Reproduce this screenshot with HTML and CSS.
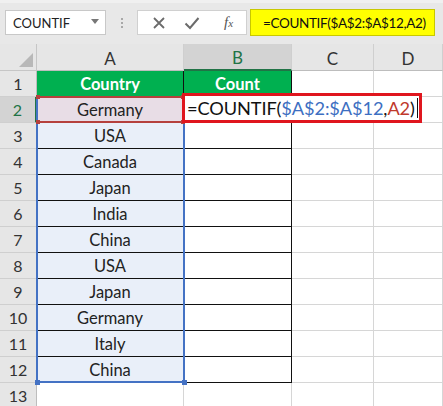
FILE: index.html
```html
<!DOCTYPE html>
<html>
<head>
<meta charset="utf-8">
<link rel="stylesheet" href="styles.css">
</head>
<body>
<div class="toolbar">
  <div class="namebox"><span class="nametext">COUNTIF</span><svg class="caret" width="8" height="5" viewBox="0 0 8 5"><path d="M0 0H8L4 5Z" fill="#777"/></svg></div>
  <div class="dots"><i></i><i></i><i></i></div>
  <div class="fbuttons">
    <svg class="ico" width="14" height="14" viewBox="0 0 14 14"><path d="M2 2L12 12M12 2L2 12" stroke="#6b6b6b" stroke-width="1.8"/></svg>
    <svg class="ico" width="16" height="14" viewBox="0 0 16 14"><path d="M1.5 7.5L6 12L14.5 2" stroke="#6b6b6b" stroke-width="2" fill="none"/></svg>
    <span class="fx">f<span class="fxs">x</span></span>
  </div>
  <div class="formula">=COUNTIF($A$2:$A$12,A2)</div>
</div>
<div class="sheet">
  <div class="grid">
    <div class="corner"><svg width="14" height="14" viewBox="0 0 14 14"><path d="M14 0V14H0Z" fill="#b8b8b8"/></svg></div>
    <div class="ch">A</div><div class="ch active">B</div><div class="ch">C</div><div class="ch">D</div>

    <div class="rh">1</div><div class="c a hd">Country</div><div class="c b hd">Count</div><div class="c"></div><div class="c"></div>
    <div class="rh active">2</div><div class="c a red">Germany</div><div class="c b"></div><div class="c"></div><div class="c"></div>
    <div class="rh">3</div><div class="c a">USA</div><div class="c b"></div><div class="c"></div><div class="c"></div>
    <div class="rh">4</div><div class="c a">Canada</div><div class="c b"></div><div class="c"></div><div class="c"></div>
    <div class="rh">5</div><div class="c a">Japan</div><div class="c b"></div><div class="c"></div><div class="c"></div>
    <div class="rh">6</div><div class="c a">India</div><div class="c b"></div><div class="c"></div><div class="c"></div>
    <div class="rh">7</div><div class="c a">China</div><div class="c b"></div><div class="c"></div><div class="c"></div>
    <div class="rh">8</div><div class="c a">USA</div><div class="c b"></div><div class="c"></div><div class="c"></div>
    <div class="rh">9</div><div class="c a">Japan</div><div class="c b"></div><div class="c"></div><div class="c"></div>
    <div class="rh">10</div><div class="c a">Germany</div><div class="c b"></div><div class="c"></div><div class="c"></div>
    <div class="rh">11</div><div class="c a">Italy</div><div class="c b"></div><div class="c"></div><div class="c"></div>
    <div class="rh">12</div><div class="c a">China</div><div class="c b"></div><div class="c"></div><div class="c"></div>
    <div class="rh">13</div><div class="c e"></div><div class="c e"></div><div class="c"></div><div class="c"></div>
  </div>
  <div class="blue-range"><i class="h hbl"></i><i class="h hbr"></i></div>
  <div class="red-range"><i class="h htl"></i><i class="h hbl2"></i><i class="h htr"></i><i class="h hbr2"></i></div>
  <div class="editbox"><span>=COUNTIF(</span><span class="ref-b">$A$2:$A$12</span><span>,</span><span class="ref-r">A2</span><span>)</span><span class="cursor"></span></div>
</div>
</body>
</html>
```
FILE: styles.css
```css
* { box-sizing: border-box; }
body { margin: 0; width: 443px; height: 406px; overflow: hidden; background: #fff; font-family: "Lato", "Liberation Sans", sans-serif; }

.toolbar { height: 44px; background: #e8e8e8; display: flex; align-items: flex-start; padding-top: 10px; padding-left: 5px; border-top: 3px solid #f0f0f0; }
.namebox { width: 101px; height: 25px; background: #fff; border: 1px solid #c8c8c8; display: flex; align-items: center; justify-content: space-between; padding: 0 6px 0 7px; margin-top: -3px; }
.nametext { font-size: 13px; color: #222; }
.caret { margin-top: -2px; }
.dots { width: 31px; height: 25px; display: flex; flex-direction: column; align-items: center; justify-content: center; gap: 2px; margin-top: -3px; }
.dots i { width: 2px; height: 2px; background: #a8a8a8; display: block; }
.fbuttons { width: 110px; height: 25px; background: #fff; border: 1px solid #d0d0d0; display: flex; align-items: center; padding-left: 14px; gap: 18px; margin-top: -3px; }
.ico { display: block; }
.fx { font-family: "Liberation Serif", serif; font-style: italic; font-size: 15px; color: #555; margin-left: 6px; }
.fxs { font-size: 11px; }
.formula { margin-left: 3px; width: 185px; height: 27px; background: #ffff00; border: 1px solid #c8c800; font-size: 13.5px; color: #111; display: flex; align-items: center; padding-left: 12px; margin-top: -4px; letter-spacing: -0.35px; white-space: nowrap; }

.sheet { position: relative; }
.grid { display: grid; grid-template-columns: 37px 147px 108px 82px 69px; grid-template-rows: 27px repeat(13, 26px); }
.corner { background: #e6e6e6; border-right: 1px solid #c6c6c6; border-bottom: 1px solid #c6c6c6; display: flex; align-items: flex-end; justify-content: flex-end; padding: 0 3px 3px 0; }
.ch { background: #e6e6e6; border-right: 1px solid #cfcfcf; border-bottom: 1px solid #bdbdbd; font-size: 17px; color: #333; display: flex; align-items: center; justify-content: center; padding-top: 2px; }
.ch.active { background: #d3d3d3; color: #217346; border-bottom: 2px solid #217346; }
.rh { background: #e6e6e6; border-right: 1px solid #bdbdbd; border-bottom: 1px solid #cfcfcf; font-size: 16px; color: #333; display: flex; align-items: center; justify-content: center; }
.rh.active { background: #d3d3d3; color: #217346; border-right: 2px solid #217346; }
.c { border-right: 1px solid #d6d6d6; border-bottom: 1px solid #d6d6d6; font-size: 16.5px; color: #222; display: flex; align-items: center; justify-content: center; }
.c.a { background: #e9eff9; border-bottom: 1px solid #111; border-right: 1px solid #111; }
.c.b { border-bottom: 1px solid #111; border-right: 1px solid #111; }
.c.hd { background: #00b050; color: #fff; font-weight: 700; }
.c.red { background: #e8dde6; }

.blue-range { position: absolute; left: 36px; top: 52px; width: 149px; height: 287px; border: 2px solid #4472c4; border-top: none; pointer-events: none; }
.h { position: absolute; width: 5px; height: 5px; display: block; }
.blue-range .h { background: #4472c4; }
.hbl { left: -3px; bottom: -4px; }
.hbr { right: -4px; bottom: -4px; }
.red-range { position: absolute; left: 36px; top: 52px; width: 149px; height: 27px; border-top: 2px solid #b5403d; border-bottom: 2px solid #b5403d; }
.red-range .h { background: #b5403d; width: 4px; height: 4px; }
.htl { left: 0; top: -3px; }
.hbl2 { left: 0; bottom: -3px; }
.htr { right: 0; top: -3px; }
.hbr2 { right: 0; bottom: -3px; }

.editbox { position: absolute; left: 182px; top: 49px; width: 240px; height: 30px; background: #fff; border: 3px solid #e0161e; font-size: 18.2px; letter-spacing: -0.1px; color: #111; display: flex; align-items: center; padding-left: 2px; white-space: nowrap; }
.ref-b { color: #3d6fc2; }
.ref-r { color: #c0392b; }
.cursor { width: 1px; height: 20px; background: #111; margin-left: 2px; }
```
